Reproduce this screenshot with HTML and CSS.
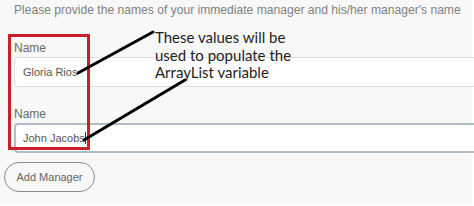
FILE: index.html
```html
<!DOCTYPE html>
<html>
<head>
<meta charset="utf-8">
<link rel="stylesheet" href="styles.css">
</head>
<body>
<div class="panel">
  <p class="intro">Please provide the names of your immediate manager and his/her manager's name</p>
  <div class="group first">
    <label class="label">Name</label>
    <div class="input">Gloria Rios</div>
  </div>
  <div class="group second">
    <label class="label">Name</label>
    <div class="input focused">John Jacobs<span class="caret"></span></div>
  </div>
  <button class="btn">Add Manager</button>

  <div class="redbox"></div>
  <svg class="arrows" width="474" height="206" viewBox="0 0 474 206">
    <line x1="78" y1="73" x2="153" y2="32" stroke="#000" stroke-width="3" stroke-linecap="round"/>
    <line x1="84" y1="140" x2="185" y2="80" stroke="#000" stroke-width="3" stroke-linecap="round"/>
  </svg>
  <div class="note">These values will be<br>used to populate the<br>ArrayList variable</div>
</div>
</body>
</html>
```

FILE: styles.css
```css
html, body {
  margin: 0;
  padding: 0;
  background: #ffffff;
  overflow: hidden;
}
.panel {
  position: relative;
  width: 472px;
  height: 204px;
  background: #f8f8f8;
  font-family: "Liberation Sans", Arial, sans-serif;
  display: flex;
  flex-direction: column;
  align-items: flex-start;
}
.intro {
  margin: 0;
  padding: 3px 0 0 14px;
  font-size: 12.1px;
  line-height: 15px;
  color: #808080;
  white-space: nowrap;
}
.group {
  display: flex;
  flex-direction: column;
  padding-left: 14px;
}
.first { margin-top: 23px; }
.second { margin-top: 20px; }
.label {
  font-size: 12px;
  line-height: 14px;
  color: #6a6a6a;
  margin-bottom: 2px;
}
.input {
  box-sizing: border-box;
  width: 462px;
  height: 30px;
  background: #fff;
  border: 1px solid #dedede;
  border-right: none;
  border-radius: 4px 0 0 4px;
  padding-left: 8px;
  font-size: 11px;
  line-height: 28px;
  color: #555;
}
.focused {
  border: 2px solid #b3bcc3;
  border-right: none;
  line-height: 26px;
  padding-left: 7px;
  width: 462px;
}
.caret {
  display: inline-block;
  width: 1px;
  height: 12px;
  background: #333;
  vertical-align: -2px;
}
.btn {
  margin: 9px 0 0 4px;
  width: 91px;
  height: 30px;
  border: 1px solid #8a8a8a;
  border-radius: 15px;
  background: #f8f8f8;
  font-family: "Liberation Sans", Arial, sans-serif;
  font-size: 11px;
  color: #666;
  padding: 0;
}
.redbox {
  position: absolute;
  left: 8px;
  top: 34px;
  width: 82px;
  height: 116px;
  box-sizing: border-box;
  border: 3px solid #cc1f2c;
}
.arrows {
  position: absolute;
  left: 0;
  top: 0;
}
.note {
  position: absolute;
  left: 155px;
  top: 29px;
  font-family: Lato, "Open Sans", sans-serif;
  font-size: 15px;
  line-height: 17.5px;
  color: #1e1e1e;
}
```
